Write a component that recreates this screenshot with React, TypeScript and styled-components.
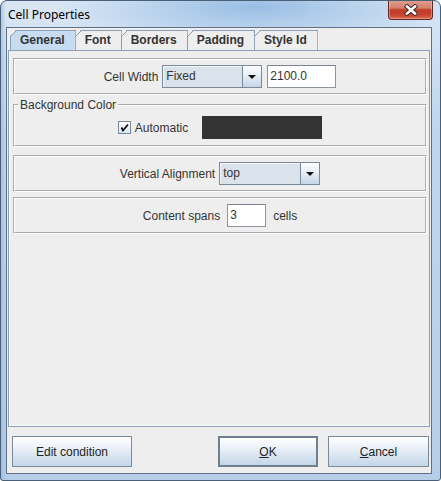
import React from 'react';
import styled, { createGlobalStyle } from 'styled-components';

const Global = createGlobalStyle`
  html, body { margin: 0; padding: 0; background: #ffffff; }
  body {
    width: 441px; height: 481px; overflow: hidden;
    font-family: "Liberation Sans", Arial, sans-serif;
  }
  * { box-sizing: border-box; }
`;

const Window = styled.div`
  width: 441px;
  height: 481px;
  border: 1px solid #4a5f78;
  border-radius: 7px 7px 3px 3px;
  background:
    radial-gradient(ellipse 200px 40px at 58% 6px, rgba(150, 188, 228, 0.95), rgba(150, 188, 228, 0)),
    linear-gradient(90deg, rgba(140, 175, 215, 0.5) 0px, rgba(140, 175, 215, 0) 5px),
    linear-gradient(180deg, #dae7f5 0%, #c0d6ed 25%, #b6cee9 100%);
  display: flex;
  flex-direction: column;
  padding-bottom: 6px;
  overflow: hidden;
`;

const TitleBar = styled.div`
  height: 26px;
  display: flex;
  align-items: flex-start;
  flex-shrink: 0;
`;

const Title = styled.div`
  font-family: "Noto Sans", "DejaVu Sans", sans-serif;
  font-size: 12px;
  line-height: 16px;
  color: #000000;
  margin: 6px 0 0 7px;
`;

const CloseButton = styled.div`
  width: 45px;
  height: 20px;
  margin: -1px 7px 0 auto;
  border: 1px solid #5c2a24;
  border-top: none;
  border-radius: 0 0 4px 4px;
  background: linear-gradient(180deg, #e0a092 0%, #d57f6c 42%, #c13d2a 52%, #c4412d 75%, #dc6a4e 100%);
  box-shadow: inset 0 0 0 1px rgba(255, 215, 205, 0.4);
  display: flex;
  align-items: center;
  justify-content: center;
`;

const Client = styled.div`
  flex: 1;
  margin: 0 8px 0 5px;
  background: #eeeeee;
  border: 1px solid #5d7189;
  padding: 2px 1px 6px 1px;
  display: flex;
  flex-direction: column;
`;

const TabRow = styled.div`
  display: flex;
  height: 20px;
  padding-left: 2px;
  flex-shrink: 0;
`;

const Tab = styled.div<{ $active?: boolean }>`
  position: relative;
  z-index: ${(p) => (p.$active ? 2 : 1)};
  height: 20px;
  padding: 0 10px 0 9px;
  margin-left: -1px;
  &:first-child { margin-left: 0; }
  border: 1px solid #8a9fb7;
  border-bottom: none;
  font-size: 12px;
  font-weight: bold;
  line-height: 19px;
  color: #333333;
  white-space: nowrap;
  background-color: ${(p) => (p.$active ? '#c8dcf1' : '#eeeeee')};
  background-image: linear-gradient(
    135deg,
    transparent 0px,
    transparent 4.3px,
    #8a9fb7 4.3px,
    #8a9fb7 5.4px,
    transparent 5.4px
  );
  background-origin: border-box;
  clip-path: polygon(0 6px, 6px 0, 100% 0, 100% 100%, 0 100%);
`;

const TabPane = styled.div`
  flex: 1;
  border: 1px solid #8a9fb7;
  background: #eeeeee;
  box-shadow: inset 1px 0 0 #ffffff, inset 0 -1px 0 #ffffff;
  padding: 7px 2px 0 4px;
  display: flex;
  flex-direction: column;
`;

const Panel = styled.div<{ $top?: number; $gap?: number }>`
  height: 37px;
  margin-top: ${(p) => p.$top ?? 0}px;
  border: 2px groove #ffffff;
  display: flex;
  align-items: center;
  justify-content: center;
  gap: ${(p) => p.$gap ?? 4}px;
`;

const Group = styled.fieldset`
  margin: 3px 0 0 0;
  padding: 4px 0 6px 0;
  min-inline-size: 0;
  border: 2px groove #ffffff;
`;

const GroupTitle = styled.legend`
  margin-left: 3px;
  padding: 0 2px;
  font-size: 12px;
  line-height: 14px;
  color: #333333;
`;

const GroupRow = styled.div`
  height: 23px;
  display: flex;
  align-items: center;
  justify-content: center;
`;

const Label = styled.span`
  font-size: 12px;
  color: #333333;
  white-space: nowrap;
`;

const Combo = styled.div<{ $w: number }>`
  width: ${(p) => p.$w}px;
  height: 23px;
  display: flex;
  border: 1px solid #7a8a99;
`;

const ComboValue = styled.div`
  flex: 1;
  background: #dae2eb;
  box-shadow: inset 1px 1px 0 #f2f6fa;
  font-size: 12px;
  line-height: 20px;
  color: #333333;
  padding-left: 3px;
`;

const ComboArrow = styled.div`
  width: 19px;
  border-left: 1px solid #7a8a99;
  background: linear-gradient(180deg, #fdfeff 0%, #e6eef6 45%, #c6d6e8 100%);
  display: flex;
  align-items: center;
  justify-content: center;
  &::after {
    content: '';
    border-left: 4px solid transparent;
    border-right: 4px solid transparent;
    border-top: 4px solid #111111;
    margin-top: 1px;
  }
`;

const Field = styled.div<{ $w: number; $ml?: number }>`
  width: ${(p) => p.$w}px;
  height: 23px;
  margin-left: ${(p) => p.$ml ?? 0}px;
  background: #ffffff;
  border: 1px solid #8a959f;
  border-top-color: #7a8591;
  font-size: 12px;
  line-height: 21px;
  color: #333333;
  padding-left: 2px;
`;

const CheckBox = styled.div`
  width: 13px;
  height: 13px;
  border: 1px solid #7a8a99;
  background: linear-gradient(180deg, #ffffff 0%, #dbe5ef 100%);
  display: flex;
  align-items: center;
  justify-content: center;
  margin-right: 4px;
`;

const Swatch = styled.div`
  width: 120px;
  height: 23px;
  background: #333333;
  margin-left: 14px;
`;

const ButtonRow = styled.div`
  display: flex;
  margin-top: 9px;
  padding: 0 1px 0 4px;
  gap: 10px;
  flex-shrink: 0;
`;

const Button = styled.div<{ $w: number; $default?: boolean; $push?: boolean }>`
  width: ${(p) => p.$w}px;
  height: 31px;
  margin-right: ${(p) => (p.$push ? 'auto' : '0')};
  border: ${(p) => (p.$default ? '2px solid #6f7f8f' : '1px solid #7a8a99')};
  background: linear-gradient(180deg, #ffffff 0%, #f2f6fb 25%, #dce7f2 60%, #c4d6e9 100%);
  display: flex;
  align-items: center;
  justify-content: center;
  font-size: 12px;
  color: #222222;
  white-space: nowrap;
`;

const CloseGlyph = () => (
  <svg width="16" height="12" viewBox="0 0 16 12">
    <path d="M4 2.5 L12 9.5 M12 2.5 L4 9.5" stroke="#3b2a28" strokeWidth="4.4" strokeLinecap="square" />
    <path d="M4 2.5 L12 9.5 M12 2.5 L4 9.5" stroke="#ffffff" strokeWidth="2.6" strokeLinecap="square" />
  </svg>
);

const CheckMark = () => (
  <svg width="9" height="9" viewBox="0 0 9 9">
    <path d="M1.5 4.5 L3 7.5 L8 1.5" fill="none" stroke="#111111" strokeWidth="1.8" />
  </svg>
);

export default function App() {
  return (
    <>
      <Global />
      <Window>
        <TitleBar>
          <Title>Cell Properties</Title>
          <CloseButton>
            <CloseGlyph />
          </CloseButton>
        </TitleBar>
        <Client>
          <TabRow>
            <Tab $active>General</Tab>
            <Tab>Font</Tab>
            <Tab>Borders</Tab>
            <Tab>Padding</Tab>
            <Tab>Style Id</Tab>
          </TabRow>
          <TabPane>
            <Panel>
              <Label>Cell Width</Label>
              <Combo $w={100}>
                <ComboValue>Fixed</ComboValue>
                <ComboArrow />
              </Combo>
              <Field $w={69} $ml={1}>2100.0</Field>
            </Panel>
            <Group>
              <GroupTitle>Background Color</GroupTitle>
              <GroupRow>
                <CheckBox>
                  <CheckMark />
                </CheckBox>
                <Label>Automatic</Label>
                <Swatch />
              </GroupRow>
            </Group>
            <Panel $top={8}>
              <Label>Vertical Alignment</Label>
              <Combo $w={101}>
                <ComboValue>top</ComboValue>
                <ComboArrow />
              </Combo>
            </Panel>
            <Panel $top={5} $gap={7}>
              <Label>Content spans</Label>
              <Field $w={39}>3</Field>
              <Label>cells</Label>
            </Panel>
          </TabPane>
          <ButtonRow>
            <Button $w={120} $push>Edit condition</Button>
            <Button $w={100} $default>
              <span><u>O</u>K</span>
            </Button>
            <Button $w={101}>
              <span><u>C</u>ancel</span>
            </Button>
          </ButtonRow>
        </Client>
      </Window>
    </>
  );
}
